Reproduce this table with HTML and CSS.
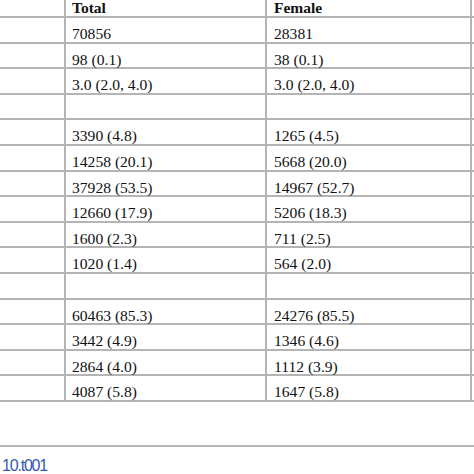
FILE: index.html
```html
<!DOCTYPE html>
<html>
<head>
<meta charset="utf-8">
<link rel="stylesheet" href="styles.css">
</head>
<body>
<div class="table">
  <div class="row head"><div class="c c0"></div><div class="c c1">Total</div><div class="c c2">Female</div><div class="c c3"></div></div>
  <div class="row"><div class="c c0"></div><div class="c c1">70856</div><div class="c c2">28381</div><div class="c c3"></div></div>
  <div class="row"><div class="c c0"></div><div class="c c1">98 (0.1)</div><div class="c c2">38 (0.1)</div><div class="c c3"></div></div>
  <div class="row"><div class="c c0"></div><div class="c c1">3.0 (2.0, 4.0)</div><div class="c c2">3.0 (2.0, 4.0)</div><div class="c c3"></div></div>
  <div class="row"><div class="c c0"></div><div class="c c1"></div><div class="c c2"></div><div class="c c3"></div></div>
  <div class="row"><div class="c c0"></div><div class="c c1">3390 (4.8)</div><div class="c c2">1265 (4.5)</div><div class="c c3"></div></div>
  <div class="row"><div class="c c0"></div><div class="c c1">14258 (20.1)</div><div class="c c2">5668 (20.0)</div><div class="c c3"></div></div>
  <div class="row"><div class="c c0"></div><div class="c c1">37928 (53.5)</div><div class="c c2">14967 (52.7)</div><div class="c c3"></div></div>
  <div class="row"><div class="c c0"></div><div class="c c1">12660 (17.9)</div><div class="c c2">5206 (18.3)</div><div class="c c3"></div></div>
  <div class="row"><div class="c c0"></div><div class="c c1">1600 (2.3)</div><div class="c c2">711 (2.5)</div><div class="c c3"></div></div>
  <div class="row"><div class="c c0"></div><div class="c c1">1020 (1.4)</div><div class="c c2">564 (2.0)</div><div class="c c3"></div></div>
  <div class="row"><div class="c c0"></div><div class="c c1"></div><div class="c c2"></div><div class="c c3"></div></div>
  <div class="row"><div class="c c0"></div><div class="c c1">60463 (85.3)</div><div class="c c2">24276 (85.5)</div><div class="c c3"></div></div>
  <div class="row"><div class="c c0"></div><div class="c c1">3442 (4.9)</div><div class="c c2">1346 (4.6)</div><div class="c c3"></div></div>
  <div class="row"><div class="c c0"></div><div class="c c1">2864 (4.0)</div><div class="c c2">1112 (3.9)</div><div class="c c3"></div></div>
  <div class="row"><div class="c c0"></div><div class="c c1">4087 (5.8)</div><div class="c c2">1647 (5.8)</div><div class="c c3"></div></div>
</div>
<div class="foot"></div>
<div class="doi">10.t001</div>
</body>
</html>
```

FILE: styles.css
```css
html, body {
  margin: 0;
  padding: 0;
  background: #ffffff;
}
body {
  width: 474px;
  height: 474px;
  overflow: hidden;
}
.table {
  display: flex;
  flex-direction: column;
}
.row {
  display: grid;
  grid-template-columns: 66px 201px 205px 2px;
  height: 25.6px;
  box-sizing: border-box;
  border-bottom: 2px solid #b4b4b4;
}
.row.head {
  height: 18px;
}
.c {
  box-sizing: border-box;
  font-family: "Liberation Serif", "Times New Roman", serif;
  font-size: 15.6px;
  line-height: 15px;
  color: #111111;
  padding-top: 8px;
  white-space: nowrap;
}
.head .c {
  padding-top: 0;
  font-size: 15.5px;
  line-height: 15.5px;
  font-weight: bold;
}
.c0, .c1, .c2 {
  border-right: 2px solid #b4b4b4;
}
.c1 {
  padding-left: 6px;
}
.c2 {
  padding-left: 7px;
}
.foot {
  height: 45px;
  box-sizing: border-box;
  border-bottom: 2px solid #b4b4b4;
}
.doi {
  font-family: "Liberation Sans", Arial, sans-serif;
  font-size: 16px;
  letter-spacing: -1.2px;
  color: #3557b0;
  padding-left: 2px;
  padding-top: 11px;
  line-height: 15px;
}
```
